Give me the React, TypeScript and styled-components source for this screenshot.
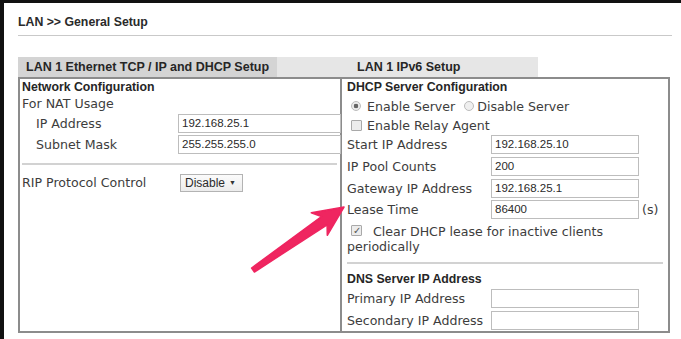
import styled, { createGlobalStyle } from "styled-components";

const GlobalStyle = createGlobalStyle`
  html, body {
    margin: 0;
    padding: 0;
    background: #fff;
  }
  body {
    font-family: "DejaVu Sans", Verdana, sans-serif;
    color: #3a3a3a;
  }
`;

const Frame = styled.div`
  position: relative;
  width: 681px;
  height: 339px;
  box-sizing: border-box;
  border-top: 3px solid #111;
  border-left: 4px solid #111;
  padding-left: 14px;
  overflow: hidden;
`;

const Title = styled.h1`
  margin: 0;
  padding-top: 11px;
  font: bold 12.3px/16px "Liberation Sans", Arial, sans-serif;
  color: #2a2a2a;
`;

const Rule = styled.div`
  margin-top: 5px;
  width: 654px;
  height: 1px;
  background: #c9c9c9;
`;

const Tabs = styled.div`
  display: flex;
  margin-top: 21px;
  height: 20px;
`;

const Tab = styled.div<{ $active?: boolean; $width: number; $indent: number }>`
  width: ${(p) => p.$width}px;
  padding-left: ${(p) => p.$indent}px;
  box-sizing: border-box;
  background: ${(p) => (p.$active ? "#d4d4d4" : "#e6e6e6")};
  font: bold 12.5px/20px "Liberation Sans", Arial, sans-serif;
  color: #262626;
  white-space: nowrap;
`;

const Table = styled.div`
  display: grid;
  grid-template-columns: 322px 324px;
  width: 652px;
  height: 256px;
  box-sizing: border-box;
  border: 2px solid #8c8c8c;
`;

const Cell = styled.div<{ $divider?: boolean; $pad: number }>`
  padding-left: ${(p) => p.$pad}px;
  border-right: ${(p) => (p.$divider ? "2px solid #8c8c8c" : "none")};
  display: flex;
  flex-direction: column;
  font-size: 12.6px;
`;

const Heading = styled.div`
  font: bold 12.3px/17px "Liberation Sans", Arial, sans-serif;
  color: #262626;
`;

const Text = styled.div`
  line-height: 16px;
  color: #3d3d3d;
`;

const Row = styled.div<{ $label: number; $h: number }>`
  display: grid;
  grid-template-columns: ${(p) => p.$label}px auto 1fr;
  align-items: center;
  height: ${(p) => p.$h}px;
`;

const Label = styled.span<{ $indent?: number }>`
  padding-left: ${(p) => p.$indent ?? 0}px;
  color: #3d3d3d;
  white-space: nowrap;
`;

const Field = styled.div<{ $width: number }>`
  width: ${(p) => p.$width}px;
  height: 19px;
  box-sizing: border-box;
  border: 1px solid #bdbdbd;
  background: #fff;
  padding-left: 3px;
  font: 11.5px/17px "Liberation Sans", Arial, sans-serif;
  color: #2a2a2a;
`;

const Unit = styled.span`
  padding-left: 3px;
  color: #3d3d3d;
`;

const Select = styled.div`
  margin-left: 2px;
  width: 63px;
  height: 18px;
  box-sizing: border-box;
  border: 1px solid #b3b3b3;
  background: linear-gradient(#fbfbfb, #ececec);
  padding-left: 4px;
  font: 12px/16px "Liberation Sans", Arial, sans-serif;
  color: #2a2a2a;
  display: flex;
  align-items: center;
  gap: 4px;
`;

const Caret = styled.span`
  font-size: 7px;
  color: #333;
`;

const Separator = styled.div<{ $top: number; $bottom: number }>`
  margin: ${(p) => p.$top}px 3px ${(p) => p.$bottom}px 0;
  height: 2px;
  background: #d2d2d2;
`;

const OptionLine = styled.div<{ $h: number }>`
  display: flex;
  align-items: center;
  height: ${(p) => p.$h}px;
  padding-left: 4px;
  color: #3d3d3d;
  white-space: nowrap;
`;

const Radio = styled.span<{ $checked?: boolean; $before?: number; $after: number }>`
  width: 8px;
  height: 8px;
  margin-left: ${(p) => p.$before ?? 0}px;
  margin-right: ${(p) => p.$after}px;
  border-radius: 50%;
  border: 1px solid #bcbcbc;
  background: ${(p) =>
    p.$checked
      ? "radial-gradient(circle, #666 0 2px, #ececec 2.6px)"
      : "#efefef"};
  flex-shrink: 0;
`;

const Check = styled.span<{ $checked?: boolean; $gap: number }>`
  position: relative;
  width: 9px;
  height: 9px;
  margin-right: ${(p) => p.$gap}px;
  border: 1px solid #a9a9a9;
  border-radius: 1px;
  background: #ececec;
  flex-shrink: 0;
  &::after {
    content: "${(p) => (p.$checked ? "✓" : "")}";
    position: absolute;
    left: 1px;
    top: -3px;
    font-size: 10px;
    font-weight: bold;
    color: #555;
  }
`;

const Wrapped = styled.div`
  padding-top: 3px;
  line-height: 15.5px;
  color: #3d3d3d;
  padding-right: 10px;
`;

const InlineCheck = styled.span`
  display: inline-flex;
  align-items: center;
  padding-left: 4px;
`;

const Arrow = styled.svg`
  position: absolute;
  left: -4px;
  top: -3px;
  width: 681px;
  height: 339px;
  pointer-events: none;
`;

export default function App() {
  return (
    <>
      <GlobalStyle />
      <Frame>
        <Title>LAN &gt;&gt; General Setup</Title>
        <Rule />
        <Tabs>
          <Tab $active $width={259} $indent={8}>
            LAN 1 Ethernet TCP / IP and DHCP Setup
          </Tab>
          <Tab $width={261} $indent={80}>
            LAN 1 IPv6 Setup
          </Tab>
        </Tabs>
        <Table>
          <Cell $divider $pad={2}>
            <Heading>Network Configuration</Heading>
            <Text>For NAT Usage</Text>
            <Row $label={156} $h={22}>
              <Label $indent={14}>IP Address</Label>
              <Field $width={163}>192.168.25.1</Field>
            </Row>
            <Row $label={156} $h={21}>
              <Label $indent={14}>Subnet Mask</Label>
              <Field $width={163}>255.255.255.0</Field>
            </Row>
            <Separator $top={8} $bottom={7} />
            <Row $label={156} $h={21}>
              <Label>RIP Protocol Control</Label>
              <Select>
                Disable <Caret>▼</Caret>
              </Select>
            </Row>
          </Cell>
          <Cell $pad={5}>
            <Heading>DHCP Server Configuration</Heading>
            <OptionLine $h={20}>
              <Radio $checked $after={6} />
              Enable Server
              <Radio $before={9} $after={3} />
              Disable Server
            </OptionLine>
            <OptionLine $h={18}>
              <Check $gap={5} />
              Enable Relay Agent
            </OptionLine>
            <Row $label={144} $h={21.7}>
              <Label>Start IP Address</Label>
              <Field $width={148}>192.168.25.10</Field>
            </Row>
            <Row $label={144} $h={21.7}>
              <Label>IP Pool Counts</Label>
              <Field $width={148}>200</Field>
            </Row>
            <Row $label={144} $h={21.7}>
              <Label>Gateway IP Address</Label>
              <Field $width={148}>192.168.25.1</Field>
            </Row>
            <Row $label={144} $h={21.7}>
              <Label>Lease Time</Label>
              <Field $width={148}>86400</Field>
              <Unit>(s)</Unit>
            </Row>
            <Wrapped>
              <InlineCheck>
                <Check $checked $gap={11} />
              </InlineCheck>
              Clear DHCP lease for inactive clients periodically
            </Wrapped>
            <Separator $top={7} $bottom={7} />
            <Heading>DNS Server IP Address</Heading>
            <Row $label={144} $h={21.5}>
              <Label>Primary IP Address</Label>
              <Field $width={148} />
            </Row>
            <Row $label={144} $h={21.5}>
              <Label>Secondary IP Address</Label>
              <Field $width={148} />
            </Row>
          </Cell>
        </Table>
        <Arrow viewBox="0 0 681 339">
          <defs>
            <filter id="soft" x="-10%" y="-10%" width="120%" height="120%">
              <feGaussianBlur stdDeviation="0.6" />
            </filter>
          </defs>
          <polygon
            points="251.6,268 321.5,216.6 311.3,212.8 344,207 327.3,235.3 327.1,224.8 254.4,272"
            fill="#ef2560"
            stroke="#ef2560"
            strokeWidth="1.5"
            strokeLinejoin="round"
            filter="url(#soft)"
          />
        </Arrow>
      </Frame>
    </>
  );
}
